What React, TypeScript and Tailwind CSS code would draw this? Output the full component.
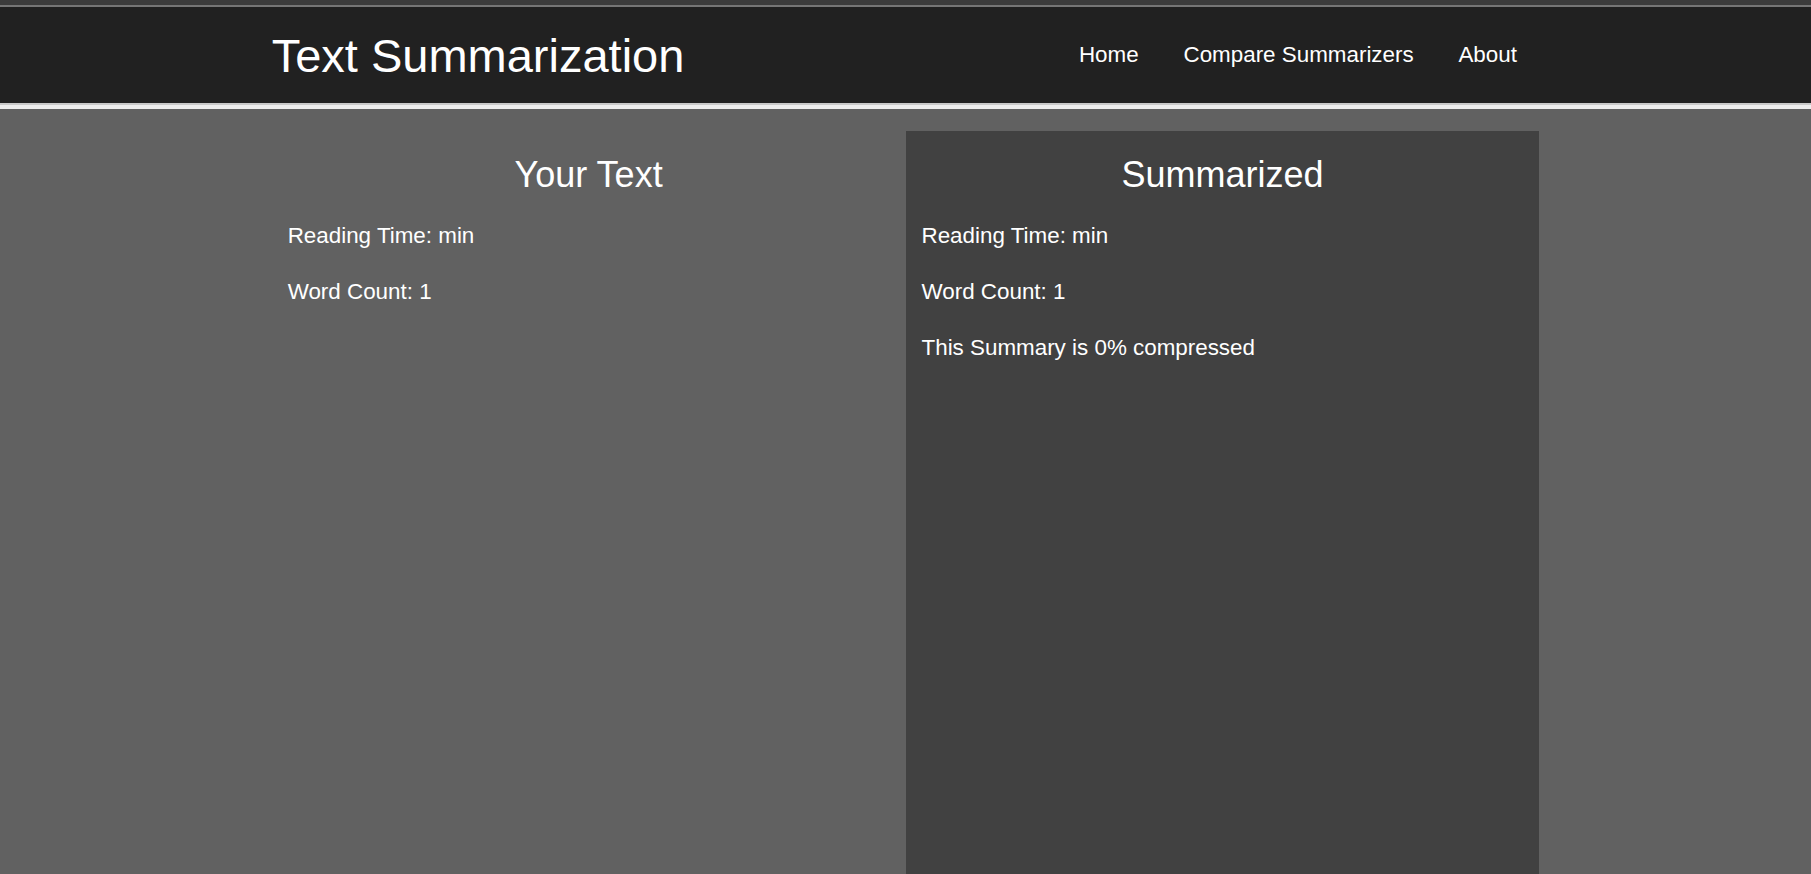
const links = ["Home", "Compare Summarizers", "About"];

function Stats({ compressed }: { compressed?: boolean }) {
  return (
    <div className="flex flex-col gap-[22.4px] mt-[17px] text-[22.4px] leading-[33.6px]">
      <p>Reading Time: min</p>
      <p>Word Count: 1</p>
      {compressed && <p>This Summary is 0% compressed</p>}
    </div>
  );
}

export default function App() {
  return (
    <div
      className="min-h-screen bg-[#616161] text-white"
      style={{ fontFamily: '"Liberation Sans", Arial, sans-serif' }}
    >
      {/* strip at the very top */}
      <div className="h-[5px] bg-[#3c3c3c]" />
      <div className="h-[2px] bg-[#767676]" />

      <nav className="bg-[#212121] h-[96px]">
        <div className="w-[70%] mx-auto h-full flex items-center justify-between">
          <h1 className="text-[47px] leading-none">Text Summarization</h1>
          <ul className="flex">
            {links.map((l) => (
              <li key={l} className="px-[22.4px] text-[22.4px]">
                {l}
              </li>
            ))}
          </ul>
        </div>
      </nav>
      <div className="h-[2px] bg-[#c9c9c9]" />
      <div className="h-[4px] bg-[#ededed]" />

      <main className="w-[70%] mx-auto grid grid-cols-2 mt-[22px]">
        <section className="px-4 pt-[17px]">
          <h2 className="text-center text-[36px] leading-[54px]">Your Text</h2>
          <Stats />
        </section>
        <section className="px-4 pt-[17px] bg-[#414141] min-h-[760px]">
          <h2 className="text-center text-[36px] leading-[54px]">Summarized</h2>
          <Stats compressed />
        </section>
      </main>
    </div>
  );
}
